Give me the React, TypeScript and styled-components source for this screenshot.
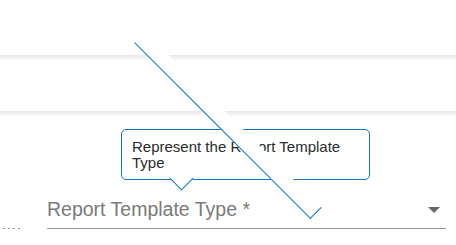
import styled, { createGlobalStyle } from 'styled-components'

const GlobalStyle = createGlobalStyle`
  html, body {
    margin: 0;
    padding: 0;
    background: #ffffff;
  }
  * {
    box-sizing: border-box;
  }
`

const Page = styled.div`
  position: relative;
  width: 456px;
  height: 245px;
  overflow: hidden;
  font-family: 'Liberation Sans', Arial, sans-serif;
  background: #ffffff;
`

const TopSpace = styled.div`
  height: 55px;
`

// shaded top edge of each stacked panel
const Shelf = styled.div<{ height: number }>`
  height: ${(props) => props.height}px;
  background: linear-gradient(to bottom, #e6e6e6 0, #f3f3f3 3px, #ffffff 7px);
`

const FieldRow = styled.div`
  display: flex;
  align-items: flex-end;
  padding: 0 10px 0 3px;
`

const Dots = styled.div`
  width: 17px;
  height: 1px;
  margin-bottom: 16px;
  background: repeating-linear-gradient(
    to right,
    #9a9a9a 0,
    #9a9a9a 2px,
    transparent 2px,
    transparent 5px
  );
`

const Field = styled.div`
  position: relative;
  flex: 1;
  display: flex;
  align-items: flex-start;
  margin-left: 27px;
  height: 33px;
  padding-top: 2px;
  border-bottom: 1px solid #959595;
  margin-bottom: 16px;
`

const Label = styled.span`
  flex: 1;
  font-size: 19.5px;
  line-height: 22px;
  color: #7a7a7a;
`

const Caret = styled.span`
  width: 0;
  height: 0;
  margin: 9px 6px 0 0;
  border-left: 6px solid transparent;
  border-right: 6px solid transparent;
  border-top: 6px solid #666666;
`

const Tooltip = styled.div`
  position: absolute;
  left: 74px;
  bottom: calc(100% + 16px);
  width: 249px;
  height: 51px;
  padding: 9px 10px 8px;
  border: 1px solid #1474b8;
  border-radius: 5px;
  background: #ffffff;
  font-size: 15px;
  line-height: 16px;
  color: #2b2b2b;
  z-index: 2;
`

const TooltipTail = styled.span`
  position: absolute;
  left: 51px;
  top: 40px;
  width: 17px;
  height: 17px;
  background: #ffffff;
  border-right: 1px solid #1474b8;
  border-bottom: 1px solid #1474b8;
  transform: rotate(45deg);
`

// stray pointer strip laid across the page
const Pointer = styled.div`
  position: absolute;
  left: 219.7px;
  top: 1px;
  width: 15.6px;
  height: 249px;
  background: #ffffff;
  border-left: 1px solid #1474b8;
  border-bottom: 1px solid #1474b8;
  transform: rotate(-45deg);
  z-index: 3;
`

export default function App() {
  return (
    <Page>
      <GlobalStyle />
      <TopSpace />
      <Shelf height={56} />
      <Shelf height={85} />
      <FieldRow>
        <Dots />
        <Field>
          <Label>Report Template Type *</Label>
          <Caret />
          <Tooltip>
            Represent the Report Template Type
            <TooltipTail />
          </Tooltip>
        </Field>
      </FieldRow>
      <Pointer />
    </Page>
  )
}
